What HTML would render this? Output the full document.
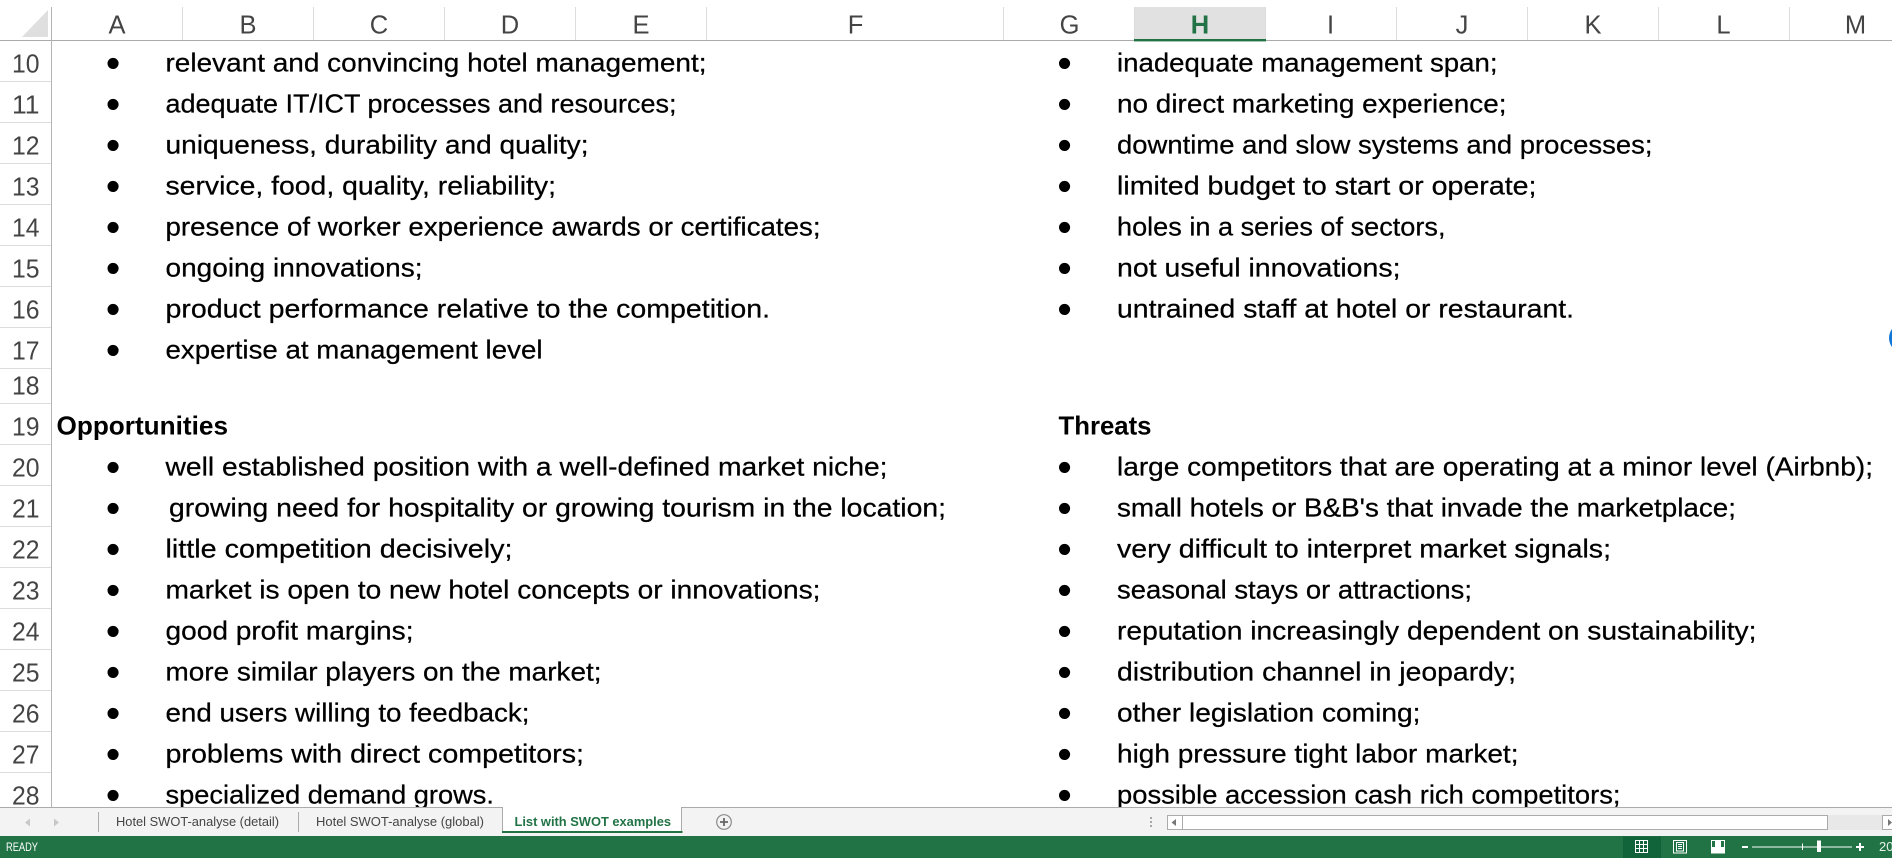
<!DOCTYPE html>
<html lang="en"><head><meta charset="utf-8"><title>List with SWOT examples</title>
<style>
html,body{margin:0;padding:0;background:#fff;overflow:hidden}
svg{display:block}
text{font-family:"Liberation Sans",sans-serif}
.t{font-size:26px;fill:#000;stroke:#000;stroke-width:.25px}
.b{font-size:26px;fill:#000;font-weight:700}
.u{font-size:41px;fill:#000;text-anchor:middle}
.n{font-size:25.5px;fill:#444}
.h{font-size:25.5px;fill:#444;text-anchor:middle}
.s{font-size:13px;fill:#444}
</style></head><body>
<svg width="1892" height="858" viewBox="0 0 1892 858" xmlns="http://www.w3.org/2000/svg">
<rect width="1892" height="858" fill="#fff"/>

<!-- column header -->
<rect x="1134" y="7" width="132" height="33" fill="#e1e1e1"/>
<g stroke="#dcdcdc" stroke-width="1">
<path d="M182.5 7V40M313.5 7V40M444.5 7V40M575.5 7V40M706.5 7V40M1003.5 7V40M1134.5 7V40M1265.5 7V40M1396.5 7V40M1527.5 7V40M1658.5 7V40M1789.5 7V40"/>
<path d="M0 81.5H51M0 122.5H51M0 163.5H51M0 204.5H51M0 245.5H51M0 286.5H51M0 327.5H51M0 368.5H51M0 403.5H51M0 444.5H51M0 485.5H51M0 526.5H51M0 567.5H51M0 608.5H51M0 649.5H51M0 690.5H51M0 731.5H51M0 772.5H51"/>
</g>
<path d="M48 10V37H22Z" fill="#dfdfdf"/>
<rect x="0" y="40" width="1892" height="1" fill="#ababab"/>
<rect x="51" y="7" width="1" height="801" fill="#b4b4b4"/>
<rect x="1134" y="39" width="132" height="2.4" fill="#217346"/>

<text class="h" x="117" y="33.5">A</text>
<text class="h" x="248" y="33.5">B</text>
<text class="h" x="379" y="33.5">C</text>
<text class="h" x="510" y="33.5">D</text>
<text class="h" x="641" y="33.5">E</text>
<text class="h" x="855.5" y="33.5">F</text>
<text class="h" x="1069.5" y="33.5">G</text>
<text class="h" x="1200" y="33.5" style="fill:#217346;font-weight:700">H</text>
<text class="h" x="1330.5" y="33.5">I</text>
<text class="h" x="1462" y="33.5">J</text>
<text class="h" x="1593" y="33.5">K</text>
<text class="h" x="1723.5" y="33.5">L</text>
<text class="h" x="1855.5" y="33.5">M</text>

<!-- row numbers -->
<g transform="translate(0,-1)">
<text class="n" x="12" y="73.5" textLength="27.5" lengthAdjust="spacingAndGlyphs">10</text>
<text class="n" x="12" y="114.5" textLength="27.5" lengthAdjust="spacingAndGlyphs">11</text>
<text class="n" x="12" y="155.5" textLength="27.5" lengthAdjust="spacingAndGlyphs">12</text>
<text class="n" x="12" y="196.5" textLength="27.5" lengthAdjust="spacingAndGlyphs">13</text>
<text class="n" x="12" y="237.5" textLength="27.5" lengthAdjust="spacingAndGlyphs">14</text>
<text class="n" x="12" y="278.5" textLength="27.5" lengthAdjust="spacingAndGlyphs">15</text>
<text class="n" x="12" y="319.5" textLength="27.5" lengthAdjust="spacingAndGlyphs">16</text>
<text class="n" x="12" y="360.5" textLength="27.5" lengthAdjust="spacingAndGlyphs">17</text>
<text class="n" x="12" y="395.5" textLength="27.5" lengthAdjust="spacingAndGlyphs">18</text>
<text class="n" x="12" y="436.5" textLength="27.5" lengthAdjust="spacingAndGlyphs">19</text>
<text class="n" x="12" y="477.5" textLength="27.5" lengthAdjust="spacingAndGlyphs">20</text>
<text class="n" x="12" y="518.5" textLength="27.5" lengthAdjust="spacingAndGlyphs">21</text>
<text class="n" x="12" y="559.5" textLength="27.5" lengthAdjust="spacingAndGlyphs">22</text>
<text class="n" x="12" y="600.5" textLength="27.5" lengthAdjust="spacingAndGlyphs">23</text>
<text class="n" x="12" y="641.5" textLength="27.5" lengthAdjust="spacingAndGlyphs">24</text>
<text class="n" x="12" y="682.5" textLength="27.5" lengthAdjust="spacingAndGlyphs">25</text>
<text class="n" x="12" y="723.5" textLength="27.5" lengthAdjust="spacingAndGlyphs">26</text>
<text class="n" x="12" y="764.5" textLength="27.5" lengthAdjust="spacingAndGlyphs">27</text>
<text class="n" x="12" y="805.5" textLength="27.5" lengthAdjust="spacingAndGlyphs">28</text>
</g>

<!-- bullets -->
<g transform="translate(0,2)">
<text class="u" x="113" y="75">•</text>
<text class="u" x="113" y="116">•</text>
<text class="u" x="113" y="157">•</text>
<text class="u" x="113" y="198">•</text>
<text class="u" x="113" y="239">•</text>
<text class="u" x="113" y="280">•</text>
<text class="u" x="113" y="321">•</text>
<text class="u" x="113" y="362">•</text>
<text class="u" x="113" y="479">•</text>
<text class="u" x="113" y="520">•</text>
<text class="u" x="113" y="561">•</text>
<text class="u" x="113" y="602">•</text>
<text class="u" x="113" y="643">•</text>
<text class="u" x="113" y="684">•</text>
<text class="u" x="113" y="725">•</text>
<text class="u" x="113" y="766">•</text>
<text class="u" x="113" y="807">•</text>
<text class="u" x="1064.5" y="75">•</text>
<text class="u" x="1064.5" y="116">•</text>
<text class="u" x="1064.5" y="157">•</text>
<text class="u" x="1064.5" y="198">•</text>
<text class="u" x="1064.5" y="239">•</text>
<text class="u" x="1064.5" y="280">•</text>
<text class="u" x="1064.5" y="321">•</text>
<text class="u" x="1064.5" y="479">•</text>
<text class="u" x="1064.5" y="520">•</text>
<text class="u" x="1064.5" y="561">•</text>
<text class="u" x="1064.5" y="602">•</text>
<text class="u" x="1064.5" y="643">•</text>
<text class="u" x="1064.5" y="684">•</text>
<text class="u" x="1064.5" y="725">•</text>
<text class="u" x="1064.5" y="766">•</text>
<text class="u" x="1064.5" y="807">•</text>
</g>

<!-- text -->
<g transform="translate(0,.7)">
<text class="t" x="165.5" y="71" textLength="541" lengthAdjust="spacingAndGlyphs">relevant and convincing hotel management;</text>
<text class="t" x="165.5" y="112" textLength="511" lengthAdjust="spacingAndGlyphs">adequate IT/ICT processes and resources;</text>
<text class="t" x="165.5" y="153" textLength="423" lengthAdjust="spacingAndGlyphs">uniqueness, durability and quality;</text>
<text class="t" x="165.5" y="194" textLength="390.5" lengthAdjust="spacingAndGlyphs">service, food, quality, reliability;</text>
<text class="t" x="165.5" y="235" textLength="655" lengthAdjust="spacingAndGlyphs">presence of worker experience awards or certificates;</text>
<text class="t" x="165.5" y="276" textLength="257" lengthAdjust="spacingAndGlyphs">ongoing innovations;</text>
<text class="t" x="165.5" y="317" textLength="604.5" lengthAdjust="spacingAndGlyphs">product performance relative to the competition.</text>
<text class="t" x="165.5" y="358" textLength="377" lengthAdjust="spacingAndGlyphs">expertise at management level</text>
<text class="b" x="56.5" y="434" textLength="171.5" lengthAdjust="spacingAndGlyphs">Opportunities</text>
<text class="t" x="165.5" y="475" textLength="722" lengthAdjust="spacingAndGlyphs">well established position with a well-defined market niche;</text>
<text class="t" x="169" y="516" textLength="777" lengthAdjust="spacingAndGlyphs">growing need for hospitality or growing tourism in the location;</text>
<text class="t" x="165.5" y="557" textLength="347" lengthAdjust="spacingAndGlyphs">little competition decisively;</text>
<text class="t" x="165.5" y="598" textLength="655" lengthAdjust="spacingAndGlyphs">market is open to new hotel concepts or innovations;</text>
<text class="t" x="165.5" y="639" textLength="248" lengthAdjust="spacingAndGlyphs">good profit margins;</text>
<text class="t" x="165.5" y="680" textLength="436" lengthAdjust="spacingAndGlyphs">more similar players on the market;</text>
<text class="t" x="165.5" y="721" textLength="364" lengthAdjust="spacingAndGlyphs">end users willing to feedback;</text>
<text class="t" x="165.5" y="762" textLength="418.5" lengthAdjust="spacingAndGlyphs">problems with direct competitors;</text>
<text class="t" x="165.5" y="803" textLength="328.5" lengthAdjust="spacingAndGlyphs">specialized demand grows.</text>

<text class="t" x="1117" y="71" textLength="380.5" lengthAdjust="spacingAndGlyphs">inadequate management span;</text>
<text class="t" x="1117" y="112" textLength="389.5" lengthAdjust="spacingAndGlyphs">no direct marketing experience;</text>
<text class="t" x="1117" y="153" textLength="535.5" lengthAdjust="spacingAndGlyphs">downtime and slow systems and processes;</text>
<text class="t" x="1117" y="194" textLength="419.5" lengthAdjust="spacingAndGlyphs">limited budget to start or operate;</text>
<text class="t" x="1117" y="235" textLength="328.5" lengthAdjust="spacingAndGlyphs">holes in a series of sectors,</text>
<text class="t" x="1117" y="276" textLength="283.5" lengthAdjust="spacingAndGlyphs">not useful innovations;</text>
<text class="t" x="1117" y="317" textLength="457" lengthAdjust="spacingAndGlyphs">untrained staff at hotel or restaurant.</text>
<text class="b" x="1058.5" y="434" textLength="93" lengthAdjust="spacingAndGlyphs">Threats</text>
<text class="t" x="1117" y="475" textLength="756" lengthAdjust="spacingAndGlyphs">large competitors that are operating at a minor level (Airbnb);</text>
<text class="t" x="1117" y="516" textLength="619" lengthAdjust="spacingAndGlyphs">small hotels or B&amp;B's that invade the marketplace;</text>
<text class="t" x="1117" y="557" textLength="494" lengthAdjust="spacingAndGlyphs">very difficult to interpret market signals;</text>
<text class="t" x="1117" y="598" textLength="355" lengthAdjust="spacingAndGlyphs">seasonal stays or attractions;</text>
<text class="t" x="1117" y="639" textLength="639.5" lengthAdjust="spacingAndGlyphs">reputation increasingly dependent on sustainability;</text>
<text class="t" x="1117" y="680" textLength="399" lengthAdjust="spacingAndGlyphs">distribution channel in jeopardy;</text>
<text class="t" x="1117" y="721" textLength="303.5" lengthAdjust="spacingAndGlyphs">other legislation coming;</text>
<text class="t" x="1117" y="762" textLength="401.5" lengthAdjust="spacingAndGlyphs">high pressure tight labor market;</text>
<text class="t" x="1117" y="803" textLength="503.5" lengthAdjust="spacingAndGlyphs">possible accession cash rich competitors;</text>
</g>

<!-- blue edge circle -->
<circle cx="1904" cy="338" r="15" fill="#1277d6"/>

<!-- sheet tabs bar -->
<rect x="0" y="808" width="1892" height="28" fill="#f3f3f3"/>
<rect x="0" y="807" width="1892" height="1" fill="#ababab"/>
<rect x="503" y="807" width="179" height="24" fill="#fff"/>
<rect x="502" y="807" width="1" height="24" fill="#ababab"/>
<rect x="681" y="807" width="1" height="24" fill="#ababab"/>
<rect x="502" y="831" width="180.5" height="2" fill="#217346"/>
<path d="M30 818.5V826.5L25 822.5Z" fill="#c8c8c8"/>
<path d="M54 818.5V826.5L59 822.5Z" fill="#c8c8c8"/>
<rect x="98" y="812" width="1" height="20" fill="#ababab"/>
<rect x="298" y="812" width="1" height="20" fill="#ababab"/>
<text class="s" x="116" y="826" textLength="163" lengthAdjust="spacingAndGlyphs">Hotel SWOT-analyse (detail)</text>
<text class="s" x="316" y="826" textLength="168" lengthAdjust="spacingAndGlyphs">Hotel SWOT-analyse (global)</text>
<text class="s" x="514.5" y="826" textLength="156.5" lengthAdjust="spacingAndGlyphs" style="fill:#217346;font-weight:700">List with SWOT examples</text>
<circle cx="724" cy="822" r="7.3" fill="none" stroke="#8a8a8a" stroke-width="1.2"/>
<path d="M720 822H728M724 818V826" stroke="#666" stroke-width="1.8"/>

<!-- scrollbar -->
<g fill="#a6a6a6"><rect x="1150" y="817" width="2" height="2"/><rect x="1150" y="821" width="2" height="2"/><rect x="1150" y="825" width="2" height="2"/></g>
<rect x="1182" y="815" width="700" height="15" fill="#e8e8e8"/>
<rect x="1167.5" y="815.5" width="15" height="14" fill="#fff" stroke="#ababab"/>
<path d="M1176 819V826L1171.5 822.5Z" fill="#777"/>
<rect x="1182.5" y="815.5" width="645" height="14" fill="#fff" stroke="#ababab"/>
<rect x="1882.5" y="815.5" width="15" height="14" fill="#fff" stroke="#ababab"/>
<path d="M1888 819V826L1892 822.5Z" fill="#777"/>

<!-- status bar -->
<rect x="0" y="836" width="1892" height="22" fill="#217346"/>
<text x="6" y="851" textLength="32" lengthAdjust="spacingAndGlyphs" style="font-size:12px;fill:#fff">READY</text>
<rect x="1623" y="836.5" width="38" height="21.5" fill="#11633a"/>
<g fill="none" stroke="#fff" stroke-width="1">
<path d="M1635.5 840.5H1647.5V852.5H1635.5ZM1639.5 840.5V852.5M1643.5 840.5V852.5M1635.5 844.5H1647.5M1635.5 848.5H1647.5"/>
<rect x="1673.5" y="840.5" width="13" height="12.5"/>
<rect x="1676.5" y="842.5" width="7" height="8.5"/>
<path d="M1678 844.5H1682M1678 846.5H1682M1678 848.5H1682"/>
<rect x="1711.5" y="840.5" width="13" height="12.5"/>
</g>
<rect x="1712" y="847" width="12" height="6" fill="#fff"/>
<rect x="1715" y="840.5" width="6" height="7" fill="#fff"/>
<rect x="1742" y="846" width="6" height="2" fill="#fff"/>
<rect x="1752" y="846.5" width="100" height="1" fill="#fff"/>
<rect x="1802" y="843.5" width="1" height="6.5" fill="#fff"/>
<rect x="1817" y="840.5" width="4" height="11.5" fill="#fff"/>
<path d="M1856 847H1864M1860 843V851" stroke="#fff" stroke-width="2"/>
<text x="1879" y="851" style="font-size:13px;fill:#e6f1ea">200%</text>
</svg>
</body></html>
